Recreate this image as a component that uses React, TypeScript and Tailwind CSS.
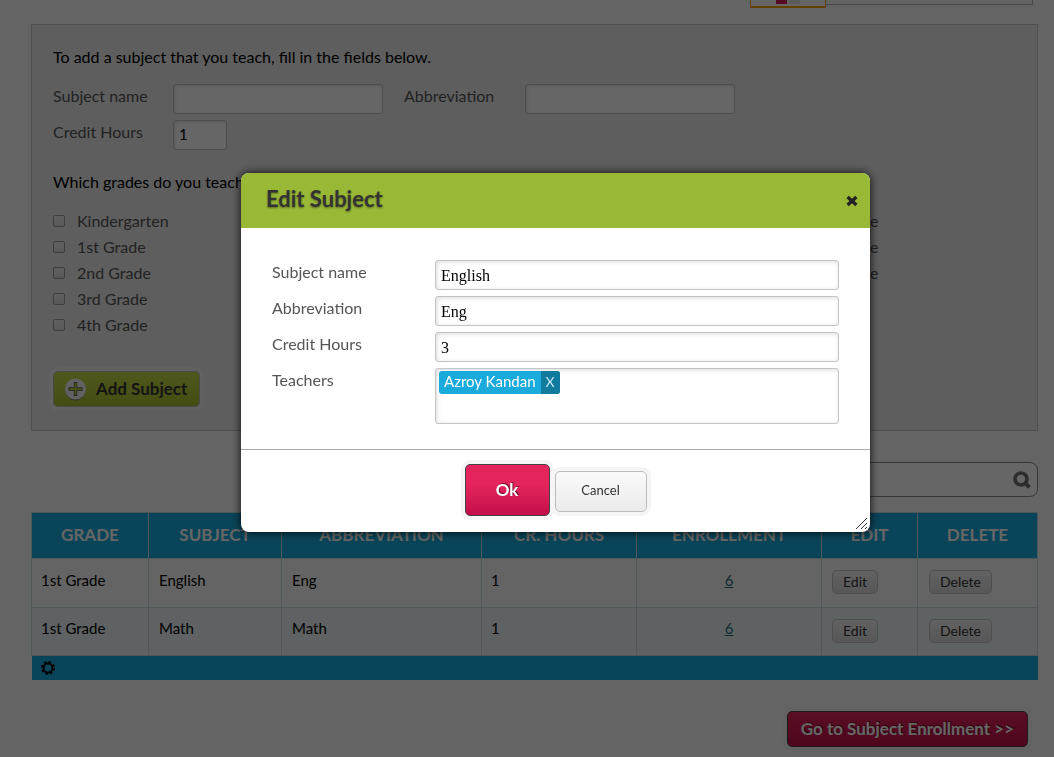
import React from "react";

const gradeColumns = [
	["Kindergarten", "1st Grade", "2nd Grade", "3rd Grade", "4th Grade"],
	["5th Grade", "6th Grade", "7th Grade", "8th Grade", "9th Grade"],
	["10th Grade", "11th Grade", "12th Grade"],
];

const headers = ["Grade", "Subject", "Abbreviation", "Cr. Hours", "Enrollment", "Edit", "Delete"];

const subjects = [
	{ grade: "1st Grade", name: "English", abbr: "Eng", hours: 1, enrolled: 6 },
	{ grade: "1st Grade", name: "Math", abbr: "Math", hours: 1, enrolled: 6 },
];

const pageInput =
	"h-[30px] rounded-[3px] border border-[#c4c4c4] bg-white px-[5px] pb-[3px] text-[15px] text-black shadow-[inset_1px_1px_3px_rgba(0,0,0,0.15)]";
const modalInput =
	"h-[30px] w-full rounded-[3px] border border-[#c4c4c4] bg-white px-[5px] pt-[2px] font-['Liberation_Serif',serif] text-base text-black shadow-[inset_1px_1px_4px_rgba(0,0,0,0.15)]";
const smallButton =
	"block h-6 rounded-[5px] border border-[#c2c2c2] bg-linear-to-b from-[#f4f4f4] to-[#dadada] px-[10px] text-sm leading-5 text-[#333]";

function TopStrip() {
	return (
		<div className="mr-[5px] flex h-6 items-start justify-end">
			<div className="flex h-2 w-[76px] items-start justify-center gap-[2px] border-x border-b-2 border-[#f5a400] bg-white">
				<span className="h-1 w-[11px] bg-[#d81b5a]" />
				<span className="h-1 w-[11px] bg-[#e4e4e4]" />
			</div>
			<div className="h-[5px] w-[207px] border-r border-b border-[#b4b4b4]" />
		</div>
	);
}

function AddSubject() {
	return (
		<form className="border border-[#c8c8c8] bg-[#ebebeb] pt-5 pr-[22px] pb-[23px] pl-[21px] text-base text-[#555]">
			<p className="leading-6 text-black">To add a subject that you teach, fill in the fields below.</p>
			<div className="mt-[15px] flex items-start">
				<label htmlFor="new-name" className="w-[120px] leading-6">Subject name</label>
				<input id="new-name" type="text" className={`${pageInput} w-[210px]`} />
				<label htmlFor="new-abbr" className="ml-[21px] w-[121px] leading-6">Abbreviation</label>
				<input id="new-abbr" type="text" className={`${pageInput} w-[210px]`} />
			</div>
			<div className="mt-[6px] flex items-start">
				<label htmlFor="new-hours" className="w-[120px] leading-6">Credit Hours</label>
				<input id="new-hours" type="text" defaultValue="1" className={`${pageInput} w-[54px]`} />
			</div>
			<fieldset className="mt-5">
				<legend className="leading-6 text-black">Which grades do you teach?</legend>
				<div className="mt-[14px] grid grid-cols-[3fr_3fr_2fr]">
					{gradeColumns.map((column) => (
						<div key={column[0]}>
							{column.map((grade) => (
								<label key={grade} className="flex h-[26px] items-center gap-3">
									<input
										type="checkbox"
										className="size-3 appearance-none rounded-[2px] border border-[#999] bg-linear-to-b from-[#f2f2f2] to-[#dcdcdc]"
									/>
									{grade}
								</label>
							))}
						</div>
					))}
				</div>
			</fieldset>
			<button
				type="button"
				className="mt-[33px] flex h-9 items-center gap-[9px] rounded-[5px] border border-[#b9b9b9] bg-linear-to-b from-[#c5da48] to-[#aac02b] pr-[12px] pl-[10px] text-[17px] font-bold text-[#333] shadow-[0_0_0_4px_#f3f3f3,0_2px_2px_rgba(0,0,0,0.5)]"
			>
				<svg width="23" height="23" viewBox="0 0 23 23" aria-hidden="true">
					<circle cx="11.5" cy="12.5" r="10" fill="#777" />
					<circle cx="11.5" cy="11" r="10.5" fill="#f2f2f2" />
					<path d="M11.5 4v14M4.5 11h14" stroke="#555" strokeWidth="3.4" />
					<path d="M11.5 5v12M5.5 11h12" stroke="#b5cb35" strokeWidth="2" />
				</svg>
				Add Subject
			</button>
		</form>
	);
}

function SubjectTable() {
	return (
		<table className="mt-[15px] w-full table-fixed border-collapse text-black">
			<colgroup>
				<col className="w-[117px]" />
				<col className="w-[133px]" />
				<col />
				<col className="w-[155px]" />
				<col className="w-[185px]" />
				<col className="w-24" />
				<col className="w-[120px]" />
			</colgroup>
			<thead>
				<tr className="h-[46px] bg-[#1aaadb] text-[17px] text-white uppercase">
					{headers.map((header) => (
						<th key={header} className="border border-[#c3dce4] p-0 pb-[2px] font-bold">{header}</th>
					))}
				</tr>
			</thead>
			<tbody>
				{subjects.map((subject) => (
					<tr key={subject.name} className="h-[49px] even:h-12 even:bg-[#ebf5f6]">
						<td className="border border-[#c8dde3] px-[9px] pb-[6px]">{subject.grade}</td>
						<td className="border border-[#c8dde3] px-[10px] pb-[6px]">{subject.name}</td>
						<td className="border border-[#c8dde3] px-[10px] pb-[6px]">{subject.abbr}</td>
						<td className="border border-[#c8dde3] px-[9px] pb-[6px]">{subject.hours}</td>
						<td className="border border-[#c8dde3] pb-[6px] text-center">
							<a href="#enrollment" className="text-[#2b6f7d] underline">{subject.enrolled}</a>
						</td>
						<td className="border border-[#c8dde3] px-[10px] pb-[2px]">
							<button type="button" className={smallButton}>Edit</button>
						</td>
						<td className="border border-[#c8dde3] px-[11px] pb-[2px]">
							<button type="button" className={smallButton}>Delete</button>
						</td>
					</tr>
				))}
			</tbody>
			<tfoot>
				<tr className="h-6 bg-[#1aaadb]">
					<td colSpan={7} className="px-[9px] py-0">
						<button type="button" aria-label="Table settings" className="block">
							<svg width="14" height="14" viewBox="0 0 14 14" fill="none" stroke="#000">
								<circle cx="7" cy="7" r="4.5" strokeWidth="2" />
								<circle cx="7" cy="7" r="6.1" strokeWidth="1.8" strokeDasharray="2.4 2.39" />
							</svg>
						</button>
					</td>
				</tr>
			</tfoot>
		</table>
	);
}

function EditSubjectModal() {
	return (
		<div className="fixed inset-0 flex items-start justify-center bg-black/60 pt-[173px] pl-[57px]">
			<div
				role="dialog"
				aria-labelledby="edit-title"
				className="relative w-full max-w-[629px] overflow-hidden rounded-lg bg-white shadow-[0_0_10px_rgba(0,0,0,0.9)]"
			>
				<header className="flex h-[55px] items-center justify-between bg-[#98b836] pr-3 pl-[25px] text-[#333]">
					<h2 id="edit-title" className="pb-1 text-[22px] leading-6 font-bold [text-shadow:0_1px_2px_rgba(0,0,0,0.4)]">Edit Subject</h2>
					<button type="button" aria-label="Close">
						<svg width="12" height="12" viewBox="0 0 12 12" stroke="#222" strokeWidth="3.4">
							<path d="M1.6 2l8.8 8M10.4 2L1.6 10" />
						</svg>
					</button>
				</header>
				<form className="grid grid-cols-[163px_1fr] items-start gap-y-[6px] px-[31px] pt-8 pb-[25px] text-base leading-6 text-[#555]">
					<label htmlFor="edit-name">Subject name</label>
					<input id="edit-name" type="text" defaultValue="English" className={modalInput} />
					<label htmlFor="edit-abbr">Abbreviation</label>
					<input id="edit-abbr" type="text" defaultValue="Eng" className={modalInput} />
					<label htmlFor="edit-hours">Credit Hours</label>
					<input id="edit-hours" type="text" defaultValue="3" className={modalInput} />
					<span>Teachers</span>
					<div className="flex h-14 items-start rounded-[3px] border border-[#c4c4c4] p-[3px] pt-[2px] shadow-[inset_1px_1px_4px_rgba(0,0,0,0.15)]">
						<div className="flex h-[23px] overflow-hidden rounded-[3px] bg-[#1aaadb] text-[15px] leading-[21px] text-white">
							<span className="px-[5px]">Azroy Kandan</span>
							<button type="button" aria-label="Remove Azroy Kandan" className="w-[19px] bg-[#127a9d] pb-[2px] text-sm text-[#c9e9f4]">
								X
							</button>
						</div>
					</div>
				</form>
				<footer className="flex items-center justify-center gap-[5px] border-t border-[#aaa] pt-[14px] pb-4">
					<button
						type="button"
						className="h-[52px] w-[85px] rounded-[5px] border border-[#444] bg-linear-to-b from-[#e4245c] from-40% to-[#c40d49] text-[17px] font-bold text-white shadow-[0_0_0_4px_#f5f5f5] [text-shadow:1px_-1px_0_rgba(0,0,0,0.5)]"
					>
						Ok
					</button>
					<button
						type="button"
						className="mt-[2px] h-[41px] w-[92px] rounded-[5px] border border-[#bbb] bg-linear-to-b from-[#fafafa] to-[#ebebeb] text-[13px] text-[#333] shadow-[0_0_0_4px_#f5f5f5]"
					>
						Cancel
					</button>
				</footer>
				<svg width="13" height="13" viewBox="0 0 13 13" className="absolute right-[2px] bottom-[2px]" stroke="#333" aria-hidden="true">
					<path d="M1 12L12 1M6 12L12 6M10 12L12 10" />
				</svg>
			</div>
		</div>
	);
}

export default function App() {
	return (
		<div className="min-h-screen bg-[#fbfbfb] font-['Lato',sans-serif] text-[15px]">
			<main className="pr-4 pl-[31px] pb-[10px]">
				<TopStrip />
				<AddSubject />
				<div className="mt-[31px] ml-auto flex h-[35px] w-[420px] items-center rounded-lg border border-[#888] bg-white pr-[6px]">
					<input type="search" aria-label="Search subjects" className="h-full min-w-0 flex-1 px-2 outline-none" />
					<button type="button" aria-label="Search">
						<svg width="18" height="18" viewBox="0 0 18 18" fill="none" stroke="#707070">
							<circle cx="8" cy="8" r="6" strokeWidth="3.6" />
							<path d="M12 12l4.4 4.4" strokeWidth="4" />
						</svg>
					</button>
				</div>
				<SubjectTable />
				<div className="mt-[31px] flex justify-end pr-[10px]">
					<button
						type="button"
						className="h-9 rounded-[5px] border border-[#444] bg-linear-to-b from-[#e4245c] to-[#c40d49] px-[13px] text-[17px] font-bold text-white shadow-[0_0_0_4px_#f5f5f5] [text-shadow:1px_-1px_0_rgba(0,0,0,0.5)]"
					>
						Go to Subject Enrollment &gt;&gt;
					</button>
				</div>
			</main>
			<EditSubjectModal />
		</div>
	);
}
